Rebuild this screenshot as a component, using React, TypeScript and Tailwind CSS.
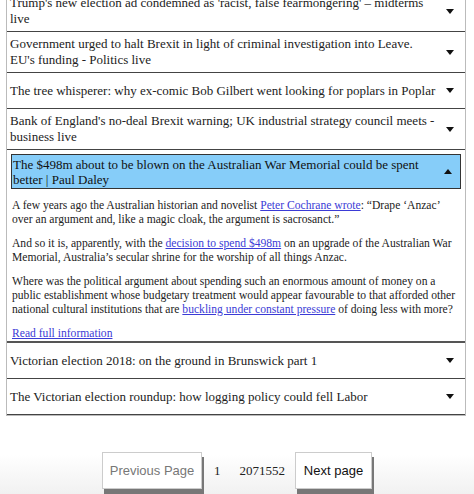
import React from "react";

type Item = { title: string; open?: boolean };

const items: Item[] = [
  { title: "Trump's new election ad condemned as 'racist, false fearmongering' – midterms live" },
  { title: "Government urged to halt Brexit in light of criminal investigation into Leave. EU's funding - Politics live" },
  { title: "The tree whisperer: why ex-comic Bob Gilbert went looking for poplars in Poplar" },
  { title: "Bank of England's no-deal Brexit warning; UK industrial strategy council meets - business live" },
  { title: "The $498m about to be blown on the Australian War Memorial could be spent better | Paul Daley", open: true },
  { title: "Victorian election 2018: on the ground in Brunswick part 1" },
  { title: "The Victorian election roundup: how logging policy could fell Labor" },
];

function Caret({ up }: { up?: boolean }) {
  return (
    <svg width="8" height="5" viewBox="0 0 8 5" className="shrink-0">
      {up ? <polygon points="0,5 8,5 4,0" fill="#111" /> : <polygon points="0,0 8,0 4,5" fill="#111" />}
    </svg>
  );
}

function OpenBody() {
  return (
    <div className="px-[1px] pt-[10px] text-[11.6px] leading-[14px] text-[#222]">
      <p className="mb-[10px]">
        A few years ago the Australian historian and novelist{" "}
        <a href="#" className="text-[#3b3bd6] underline">Peter Cochrane wrote</a>: “Drape ‘Anzac’ over an argument and,
        like a magic cloak, the argument is sacrosanct.”
      </p>
      <p className="mb-[10px]">
        And so it is, apparently, with the{" "}
        <a href="#" className="text-[#3b3bd6] underline">decision to spend $498m</a> on an upgrade of the Australian War
        Memorial, Australia’s secular shrine for the worship of all things Anzac.
      </p>
      <p className="mb-[10px]">
        Where was the political argument about spending such an enormous amount of money on a public establishment whose
        budgetary treatment would appear favourable to that afforded other national cultural institutions that are{" "}
        <a href="#" className="text-[#3b3bd6] underline">buckling under constant pressure</a> of doing less with more?
      </p>
      <a href="#" className="text-[#3b3bd6] underline">Read full information</a>
    </div>
  );
}

export default function App() {
  return (
    <div className="h-[494px] overflow-hidden bg-gradient-to-b from-white from-[92%] to-[#f1f1f1] font-['Liberation_Serif','Times_New_Roman',serif] text-[#222]">
      <div className="ml-[6px] mt-[-9px] w-[460px] border-x border-b border-[#bbb]">
        {items.map((it, i) =>
          it.open ? (
            <div key={i} className="border-b-2 border-[#555] p-[4px] pb-0">
              <div className="flex min-h-[35px] items-center justify-between gap-2 border border-[#333] bg-[#86cdf9] py-[1px] pl-[1px] pr-[8px] text-[13px] leading-[15px] text-[#111]">
                <span>{it.title}</span>
                <Caret up />
              </div>
              <OpenBody />
            </div>
          ) : (
            <div
              key={i}
              className="flex min-h-[36px] items-center justify-between gap-2 border-b border-[#444] py-[4px] pl-[3px] pr-[11px] text-[13px] leading-[16px]"
            >
              <span>{it.title}</span>
              <Caret />
            </div>
          ),
        )}
      </div>

      <div className="mt-[36px] flex items-center justify-center">
        <button className="h-[37px] w-[100px] border border-[#ccc] bg-white font-['Liberation_Sans',Arial,sans-serif] text-[13px] text-[#777] shadow-[2px_5px_0_#777]">
          Previous Page
        </button>
        <span className="ml-[12px] text-[13px]">1</span>
        <span className="ml-[19px] text-[13px]">2071552</span>
        <button className="ml-[10px] h-[37px] w-[77px] border border-[#ccc] bg-white font-['Liberation_Sans',Arial,sans-serif] text-[13px] text-[#111] shadow-[2px_5px_0_#777]">
          Next page
        </button>
      </div>
    </div>
  );
}
